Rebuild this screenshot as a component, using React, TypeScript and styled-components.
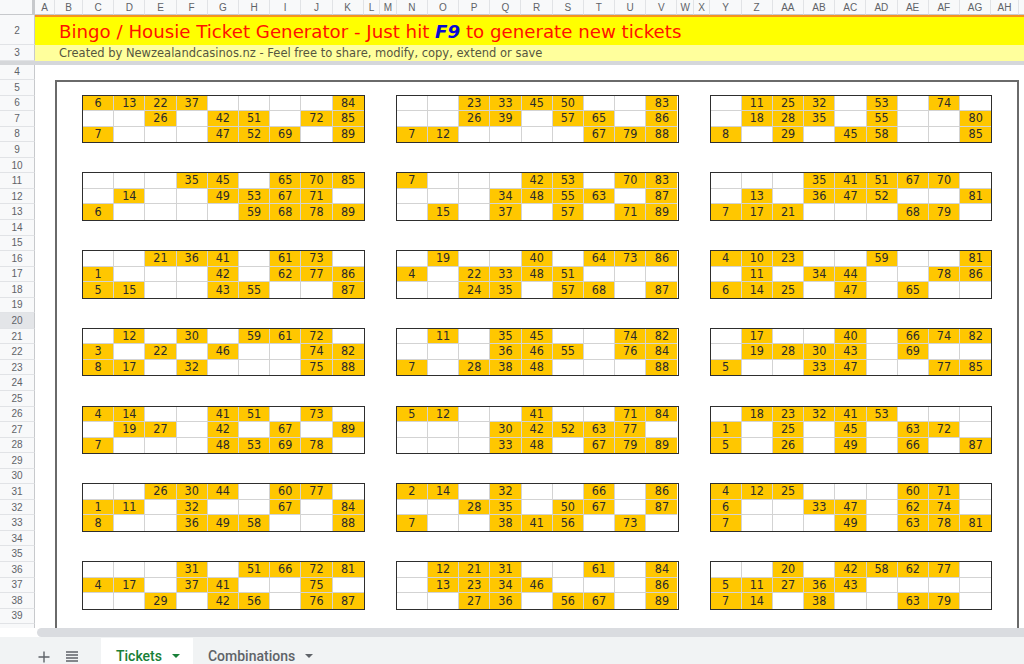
import React from "react";
import styled, { createGlobalStyle } from "styled-components";

const R = 15.56;
const CW = 31.2;
const NARROW = 16.5;

const GlobalStyle = createGlobalStyle`
  html, body { margin: 0; padding: 0; background: #fff; }
  body { overflow: hidden; }
  *, *::before, *::after { box-sizing: border-box; }
`;

type Col = { label: string; w: number };
const cols: Col[] = [
  { label: "A", w: 20 },
  { label: "B", w: 28 },
  ...["C", "D", "E", "F", "G", "H", "I", "J", "K"].map((l) => ({ label: l, w: CW })),
  { label: "L", w: NARROW },
  { label: "M", w: NARROW },
  ...["N", "O", "P", "Q", "R", "S", "T", "U", "V"].map((l) => ({ label: l, w: CW })),
  { label: "W", w: NARROW },
  { label: "X", w: NARROW },
  ...["Y", "Z", "AA", "AB", "AC", "AD", "AE", "AF", "AG"].map((l) => ({ label: l, w: CW })),
  { label: "AH", w: 28 },
];

const raw: string[][] = [
  ["6 13 22 37 . . . . 84", ". . 26 . 42 51 . 72 85", "7 . . . 47 52 69 . 89"],
  [". . 23 33 45 50 . . 83", ". . 26 39 . 57 65 . 86", "7 12 . . . . 67 79 88"],
  [". 11 25 32 . 53 . 74 .", ". 18 28 35 . 55 . . 80", "8 . 29 . 45 58 . . 85"],

  [". . . 35 45 . 65 70 85", ". 14 . . 49 53 67 71 .", "6 . . . . 59 68 78 89"],
  ["7 . . . 42 53 . 70 83", ". . . 34 48 55 63 . 87", ". 15 . 37 . 57 . 71 89"],
  [". . . 35 41 51 67 70 .", ". 13 . 36 47 52 . . 81", "7 17 21 . . . 68 79 ."],

  [". . 21 36 41 . 61 73 .", "1 . . . 42 . 62 77 86", "5 15 . . 43 55 . . 87"],
  [". 19 . . 40 . 64 73 86", "4 . 22 33 48 51 . . .", ". . 24 35 . 57 68 . 87"],
  ["4 10 23 . . 59 . . 81", ". 11 . 34 44 . . 78 86", "6 14 25 . 47 . 65 . ."],

  [". 12 . 30 . 59 61 72 .", "3 . 22 . 46 . . 74 82", "8 17 . 32 . . . 75 88"],
  [". 11 . 35 45 . . 74 82", ". . . 36 46 55 . 76 84", "7 . 28 38 48 . . . 88"],
  [". 17 . . 40 . 66 74 82", ". 19 28 30 43 . 69 . .", "5 . . 33 47 . . 77 85"],

  ["4 14 . . 41 51 . 73 .", ". 19 27 . 42 . 67 . 89", "7 . . . 48 53 69 78 ."],
  ["5 12 . . 41 . . 71 84", ". . . 30 42 52 63 77 .", ". . . 33 48 . 67 79 89"],
  [". 18 23 32 41 53 . . .", "1 . 25 . 45 . 63 72 .", "5 . 26 . 49 . 66 . 87"],

  [". . 26 30 44 . 60 77 .", "1 11 . 32 . . 67 . 84", "8 . . 36 49 58 . . 88"],
  ["2 14 . 32 . . 66 . 86", ". . 28 35 . 50 67 . 87", "7 . . 38 41 56 . 73 ."],
  ["4 12 25 . . . 60 71 .", "6 . . 33 47 . 62 74 .", "7 . . . 49 . 63 78 81"],

  [". . . 31 . 51 66 72 81", "4 17 . 37 41 . . 75 .", ". . 29 . 42 56 . 76 87"],
  [". 12 21 31 . . 61 . 84", ". 13 23 34 46 . . . 86", ". . 27 36 . 56 67 . 89"],
  [". . 20 . 42 58 62 77 .", "5 11 27 36 43 . . . .", "7 14 . 38 . . 63 79 ."],
];

const tickets: (string | null)[][][] = raw.map((t) =>
  t.map((row) => row.split(" ").map((v) => (v === "." ? null : v)))
);

const bodyRows = Array.from({ length: 36 }, (_, i) => i + 4);

/* ---------- layout ---------- */

const Page = styled.div`
  width: 1024px;
  height: 664px;
  display: flex;
  flex-direction: column;
  overflow: hidden;
  background: #fff;
  font-family: "Liberation Sans", Arial, sans-serif;
`;

const ColHeaderBar = styled.div`
  display: flex;
  height: 15px;
  flex: none;
  background: #f8f9fa;
`;

const Corner = styled.div`
  width: 35px;
  flex: none;
  background: #f8f9fa;
  border-right: 3px solid #c7c9cc;
  border-bottom: 1px solid #c7c9cc;
`;

const ColHead = styled.div<{ $w: number }>`
  width: ${(p) => p.$w}px;
  flex: none;
  display: flex;
  align-items: center;
  justify-content: center;
  font-size: 10px;
  color: #5f6368;
  border-right: 1px solid #e1e3e6;
  border-bottom: 1px solid #c7c9cc;
`;

const ColHeadFill = styled.div`
  flex: 1;
  border-bottom: 1px solid #c7c9cc;
`;

const FrozenRow = styled.div<{ $h: number }>`
  display: flex;
  height: ${(p) => p.$h}px;
  flex: none;
`;

const RowHead = styled.div<{ $active?: boolean; $h?: number; $pt?: number }>`
  width: 35px;
  flex: none;
  height: ${(p) => (p.$h ? `${p.$h}px` : "auto")};
  display: flex;
  align-items: center;
  justify-content: center;
  padding-top: ${(p) => p.$pt ?? 0}px;
  font-size: 10px;
  color: #5f6368;
  background: ${(p) => (p.$active ? "#e3e5e8" : "#f8f9fa")};
  border-right: 1px solid #c7c9cc;
  border-bottom: 1px solid #e1e3e6;
`;

const RowHeadFill = styled.div`
  flex: 1;
  background: #f8f9fa;
  border-right: 1px solid #c7c9cc;
`;

const TitleCell = styled.div`
  flex: 1;
  background: #ffff00;
  border-top: 2px solid #f7941d;
  display: flex;
  align-items: center;
  padding: 1px 0 0 24px;
  font-family: "DejaVu Sans", Verdana, sans-serif;
  font-size: 18.2px;
  color: #ff1100;
  white-space: nowrap;
`;

const Key = styled.b`
  color: #0a0ad6;
  font-style: italic;
  font-weight: 700;
`;

const SubtitleCell = styled.div`
  flex: 1;
  background: #ffff9c;
  display: flex;
  align-items: center;
  padding-left: 24px;
  font-family: "DejaVu Sans", Verdana, sans-serif;
  font-size: 11.5px;
  color: #56563f;
  white-space: nowrap;
`;

const FreezeBar = styled.div`
  height: 4px;
  flex: none;
  background: #d5d7da;
`;

const Body = styled.div`
  height: 563.5px;
  flex: none;
  display: flex;
  overflow: hidden;
`;

const RowHeadCol = styled.div`
  width: 35px;
  flex: none;
  display: flex;
  flex-direction: column;
`;

const Sheet = styled.div`
  flex: 1;
  padding: ${R}px 0 0 20px;
  overflow: hidden;
`;

const Frame = styled.div`
  width: ${28 * 2 + CW * 27 + NARROW * 4}px;
  height: 700px;
  border: 2px solid #6a6a6a;
  border-bottom: none;
  padding: ${R - 2}px 0 0 26px;
`;

const TicketGrid = styled.div`
  display: grid;
  grid-template-columns: repeat(3, ${CW * 9}px);
  column-gap: ${NARROW * 2}px;
  row-gap: ${R * 2}px;
`;

const Ticket = styled.div`
  display: grid;
  grid-template-columns: repeat(9, ${CW}px);
  grid-template-rows: repeat(3, ${R}px);
  outline: 1px solid #2e2e2e;
`;

const Cell = styled.div<{ $filled: boolean; $lastCol: boolean; $lastRow: boolean }>`
  display: flex;
  align-items: center;
  justify-content: center;
  background: ${(p) => (p.$filled ? "#ffc700" : "#ffffff")};
  border-right: ${(p) => (p.$lastCol ? "none" : "1px solid #d3d3d3")};
  border-bottom: ${(p) => (p.$lastRow ? "none" : "1px solid #d3d3d3")};
  font-family: "DejaVu Sans Condensed", "DejaVu Sans", Verdana, sans-serif;
  font-size: 12.5px;
  color: #2a2a2a;
  line-height: 1;
`;

const HScroll = styled.div`
  height: 9px;
  flex: none;
  display: flex;
  background: #fff;
`;

const ScrollThumb = styled.div`
  margin-left: 37px;
  flex: 1;
  background: #dadce0;
  border-radius: 5px 0 0 5px;
`;

const TabBar = styled.div`
  height: 38px;
  flex: none;
  background: #f1f3f4;
  display: flex;
  align-items: stretch;
  padding-left: 36px;
`;

const IconBtn = styled.div<{ $mr: number }>`
  width: 16px;
  display: flex;
  justify-content: center;
  padding-top: 14px;
  margin-right: ${(p) => p.$mr}px;
  color: #5f6368;
`;

const Tab = styled.div<{ $active?: boolean }>`
  display: flex;
  align-items: flex-start;
  gap: 10px;
  margin-top: 1px;
  padding: 10px 13px 0 15px;
  background: ${(p) => (p.$active ? "#ffffff" : "transparent")};
  color: ${(p) => (p.$active ? "#188038" : "#5f6368")};
  font-family: Roboto, "Liberation Sans", Arial, sans-serif;
  font-size: 14px;
  font-weight: 500;
  line-height: 16px;
  white-space: nowrap;
`;

const Caret = styled.svg`
  margin-top: 6px;
`;

const Plus = () => (
  <svg width="12" height="12" viewBox="0 0 12 12">
    <path d="M6 0.5v11M0.5 6h11" stroke="currentColor" strokeWidth="1.4" />
  </svg>
);

const AllSheets = () => (
  <svg width="12" height="11" viewBox="0 0 12 11">
    <path d="M0 1h12M0 4h12M0 7h12M0 10h12" stroke="currentColor" strokeWidth="1.6" />
  </svg>
);

const Down = () => (
  <Caret width="8" height="4" viewBox="0 0 8 4">
    <path d="M0 0h8L4 4z" fill="currentColor" />
  </Caret>
);

export default function App() {
  return (
    <>
      <GlobalStyle />
      <Page>
        <ColHeaderBar>
          <Corner />
          {cols.map((c) => (
            <ColHead key={c.label} $w={c.w}>
              {c.label}
            </ColHead>
          ))}
          <ColHeadFill />
        </ColHeaderBar>

        <FrozenRow $h={29.5}>
          <RowHead $pt={3}>2</RowHead>
          <TitleCell>
            Bingo / Housie Ticket Generator - Just hit&nbsp;<Key>F9</Key>&nbsp;to generate new tickets
          </TitleCell>
        </FrozenRow>
        <FrozenRow $h={16}>
          <RowHead>3</RowHead>
          <SubtitleCell>
            Created by Newzealandcasinos.nz - Feel free to share, modify, copy, extend or save
          </SubtitleCell>
        </FrozenRow>
        <FreezeBar />

        <Body>
          <RowHeadCol>
            {bodyRows.map((n) => (
              <RowHead key={n} $h={R} $active={n === 20}>
                {n}
              </RowHead>
            ))}
            <RowHeadFill />
          </RowHeadCol>
          <Sheet>
            <Frame>
              <TicketGrid>
                {tickets.map((t, ti) => (
                  <Ticket key={ti}>
                    {t.map((row, ri) =>
                      row.map((v, ci) => (
                        <Cell
                          key={`${ri}-${ci}`}
                          $filled={v !== null}
                          $lastCol={ci === 8}
                          $lastRow={ri === 2}
                        >
                          {v}
                        </Cell>
                      ))
                    )}
                  </Ticket>
                ))}
              </TicketGrid>
            </Frame>
          </Sheet>
        </Body>

        <HScroll>
          <ScrollThumb />
        </HScroll>

        <TabBar>
          <IconBtn $mr={12}>
            <Plus />
          </IconBtn>
          <IconBtn $mr={21}>
            <AllSheets />
          </IconBtn>
          <Tab $active>
            Tickets
            <Down />
          </Tab>
          <Tab>
            Combinations
            <Down />
          </Tab>
        </TabBar>
      </Page>
    </>
  );
}
